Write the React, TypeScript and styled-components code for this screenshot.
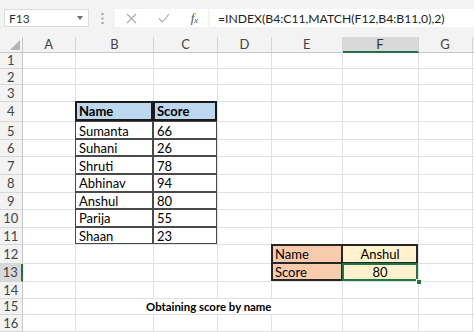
import React from "react";
import styled, { createGlobalStyle, css } from "styled-components";

const GlobalStyle = createGlobalStyle`
  html, body { margin: 0; padding: 0; background: #fff; }
  body { width: 474px; height: 332px; overflow: hidden; font-family: Lato, "Liberation Sans", sans-serif; }
  *, *::before, *::after { box-sizing: border-box; }
`;

const CELL_FONT = `Lato, "Liberation Sans", sans-serif`;
const GREEN = "#217346";

const Window = styled.div`
  width: 474px;
  height: 332px;
  display: flex;
  flex-direction: column;
  overflow: hidden;
  background: #fff;
`;

const Bar = styled.div`
  flex: none;
  height: 36.5px;
  background: #f3f3f3;
  display: flex;
  align-items: flex-start;
  padding: 9px 0 0 4px;
`;

const NameBox = styled.div`
  width: 85px;
  height: 18px;
  background: #fff;
  border: 1px solid #dcdcdc;
  display: flex;
  align-items: center;
  justify-content: space-between;
  padding: 0 5px 0 4px;
  font-family: ${CELL_FONT};
  font-size: 12px;
  color: #333;
`;

const Grip = styled.div`
  width: 26px;
  height: 18px;
  display: flex;
  align-items: center;
  justify-content: center;
`;

const FxBox = styled.div`
  width: 93px;
  height: 18px;
  background: #fff;
  display: flex;
  align-items: center;
  justify-content: space-around;
`;

const FxLabel = styled.span`
  font-family: "Liberation Serif", serif;
  font-style: italic;
  font-size: 13px;
  color: #555;
  letter-spacing: -0.5px;
  & sub {
    font-size: 9px;
    vertical-align: -1px;
  }
`;

const FormulaInput = styled.div`
  flex: 1;
  height: 18px;
  margin-left: 2px;
  background: #fff;
  padding-left: 8px;
  display: flex;
  align-items: center;
  font-family: ${CELL_FONT};
  font-size: 12.2px;
  color: #222;
  white-space: nowrap;
  overflow: hidden;
`;

const Sheet = styled.div`
  flex: 1;
  display: grid;
  grid-template-columns: 22.5px 53.5px 78px 64px 54px 70.5px 76px 54px 1fr;
  grid-template-rows: 16px repeat(3, 16.4px) 20.6px repeat(7, 17.57px) 18.7px 17.7px 17.3px 16px 17.5px;
  background: #fff;
`;

const Corner = styled.div`
  background: #f3f3f3;
  border-right: 1px solid #c8c8c8;
  border-bottom: 1px solid #c8c8c8;
  display: flex;
  align-items: flex-end;
  justify-content: flex-end;
  padding: 0 2px 2px 0;
`;

const ColHead = styled.div<{ $sel?: boolean }>`
  background: ${(p) => (p.$sel ? "#d9d9d9" : "#f3f3f3")};
  border-right: 1px solid #d4d4d4;
  border-bottom: ${(p) => (p.$sel ? `2px solid ${GREEN}` : "1px solid #c8c8c8")};
  display: flex;
  align-items: center;
  justify-content: center;
  font-family: ${CELL_FONT};
  font-size: 13px;
  color: ${(p) => (p.$sel ? "#333" : "#444")};
`;

const RowHead = styled.div<{ $sel?: boolean }>`
  background: ${(p) => (p.$sel ? "#d9d9d9" : "#f3f3f3")};
  border-right: ${(p) => (p.$sel ? `2px solid ${GREEN}` : "1px solid #c8c8c8")};
  border-bottom: 1px solid #d8d8d8;
  display: flex;
  align-items: center;
  justify-content: center;
  font-family: ${CELL_FONT};
  font-size: 13px;
  color: #444;
`;

type Frame = [number, number, number, number];

const Cell = styled.div<{
  $fill?: string;
  $bold?: boolean;
  $small?: boolean;
  $align?: "left" | "center";
  $span?: number;
  $frame?: Frame;
  $frameColor?: string;
}>`
  position: relative;
  grid-column: span ${(p) => p.$span ?? 1};
  background: ${(p) => p.$fill ?? "#fff"};
  border-right: 1px solid #e1e1e1;
  border-bottom: 1px solid #e1e1e1;
  display: flex;
  align-items: center;
  justify-content: ${(p) => (p.$align === "center" ? "center" : "flex-start")};
  padding: 0 3px;
  font-family: ${CELL_FONT};
  font-size: ${(p) => (p.$small ? "11.4px" : "13px")};
  font-weight: ${(p) => (p.$bold ? 700 : 400)};
  color: #000;
  white-space: nowrap;
  ${(p) =>
    p.$frame &&
    css`
      &::after {
        content: "";
        position: absolute;
        top: -1px;
        left: -1px;
        right: 0;
        bottom: 0;
        border-style: solid;
        border-color: ${p.$frameColor ?? "#333"};
        border-width: ${p.$frame.map((w) => `${w}px`).join(" ")};
        z-index: 1;
        pointer-events: none;
      }
    `}
`;

const Selection = styled.div`
  position: absolute;
  top: -1px;
  left: -1px;
  right: 0;
  bottom: 0;
  border: 2px solid ${GREEN};
  z-index: 2;
`;

const FillHandle = styled.div`
  position: absolute;
  right: -4px;
  bottom: -4px;
  width: 6px;
  height: 6px;
  background: ${GREEN};
  border: 1px solid #fff;
  z-index: 3;
`;

interface CellSpec {
  text?: string;
  bold?: boolean;
  small?: boolean;
  align?: "left" | "center";
  fill?: string;
  frame?: Frame;
  frameColor?: string;
  span?: number;
  selected?: boolean;
}

const columns = ["A", "B", "C", "D", "E", "F", "G", ""];
const rowCount = 16;

const people: [string, string][] = [
  ["Sumanta", "66"],
  ["Suhani", "26"],
  ["Shruti", "78"],
  ["Abhinav", "94"],
  ["Anshul", "80"],
  ["Parija", "55"],
  ["Shaan", "23"],
];

const specs: Record<string, CellSpec> = {
  B4: { text: "Name", bold: true, fill: "#bdd7ee", frame: [2, 2, 2, 2], frameColor: "#1a1a1a" },
  C4: { text: "Score", bold: true, fill: "#bdd7ee", frame: [2, 2, 2, 2], frameColor: "#1a1a1a" },
  E12: { text: "Name", fill: "#f8cbad", frame: [2, 1, 1, 2], frameColor: "#262626" },
  F12: { text: "Anshul", align: "center", fill: "#fff2cc", frame: [2, 2, 1, 1], frameColor: "#262626" },
  E13: { text: "Score", fill: "#f8cbad", frame: [1, 1, 2, 2], frameColor: "#262626" },
  F13: { text: "80", align: "center", fill: "#fff2cc", frame: [1, 2, 2, 1], frameColor: "#262626", selected: true },
  B15: { text: "Obtaining score by name", bold: true, small: true, align: "center", span: 4 },
};

people.forEach(([name, score], i) => {
  const r = 5 + i;
  specs[`B${r}`] = { text: name, frame: [1, 1, 1, 1], frameColor: "#4a4a4a" };
  specs[`C${r}`] = { text: score, frame: [1, 1, 1, 1], frameColor: "#4a4a4a" };
});

const XIcon = () => (
  <svg width="11" height="11" viewBox="0 0 11 11">
    <path d="M1 1 L10 10 M10 1 L1 10" stroke="#a8a8a8" strokeWidth="1.1" fill="none" />
  </svg>
);

const CheckIcon = () => (
  <svg width="12" height="10" viewBox="0 0 12 10">
    <path d="M1 5.5 L4.5 9 L11 1" stroke="#a8a8a8" strokeWidth="1.1" fill="none" />
  </svg>
);

const GripDots = () => (
  <svg width="3" height="11" viewBox="0 0 3 11">
    <rect x="0.5" y="0" width="2" height="2" fill="#a0a0a0" />
    <rect x="0.5" y="4.5" width="2" height="2" fill="#a0a0a0" />
    <rect x="0.5" y="9" width="2" height="2" fill="#a0a0a0" />
  </svg>
);

const DropArrow = () => (
  <svg width="6" height="4" viewBox="0 0 6 4">
    <path d="M0 0 L6 0 L3 4 Z" fill="#707070" />
  </svg>
);

const SelectAll = () => (
  <svg width="10" height="10" viewBox="0 0 10 10">
    <path d="M10 0 L10 10 L0 10 Z" fill="#b4b4b4" />
  </svg>
);

export default function App() {
  const rows: React.ReactNode[] = [];
  for (let r = 1; r <= rowCount; r++) {
    rows.push(
      <RowHead key={`h${r}`} $sel={r === 13}>
        {r}
      </RowHead>
    );
    let skip = 0;
    columns.forEach((c) => {
      if (skip > 0) {
        skip--;
        return;
      }
      const key = `${c || "H"}${r}`;
      const s = specs[key];
      if (s?.span) skip = s.span - 1;
      rows.push(
        <Cell
          key={key}
          $fill={s?.fill}
          $bold={s?.bold}
          $small={s?.small}
          $align={s?.align}
          $span={s?.span}
          $frame={s?.frame}
          $frameColor={s?.frameColor}
        >
          {s?.text}
          {s?.selected && (
            <>
              <Selection />
              <FillHandle />
            </>
          )}
        </Cell>
      );
    });
  }

  return (
    <>
      <GlobalStyle />
      <Window>
        <Bar>
          <NameBox>
            <span>F13</span>
            <DropArrow />
          </NameBox>
          <Grip>
            <GripDots />
          </Grip>
          <FxBox>
            <XIcon />
            <CheckIcon />
            <FxLabel>
              f<sub>x</sub>
            </FxLabel>
          </FxBox>
          <FormulaInput>=INDEX(B4:C11,MATCH(F12,B4:B11,0),2)</FormulaInput>
        </Bar>
        <Sheet>
          <Corner>
            <SelectAll />
          </Corner>
          {columns.map((c, i) => (
            <ColHead key={`c${i}`} $sel={c === "F"}>
              {c}
            </ColHead>
          ))}
          {rows}
        </Sheet>
      </Window>
    </>
  );
}
